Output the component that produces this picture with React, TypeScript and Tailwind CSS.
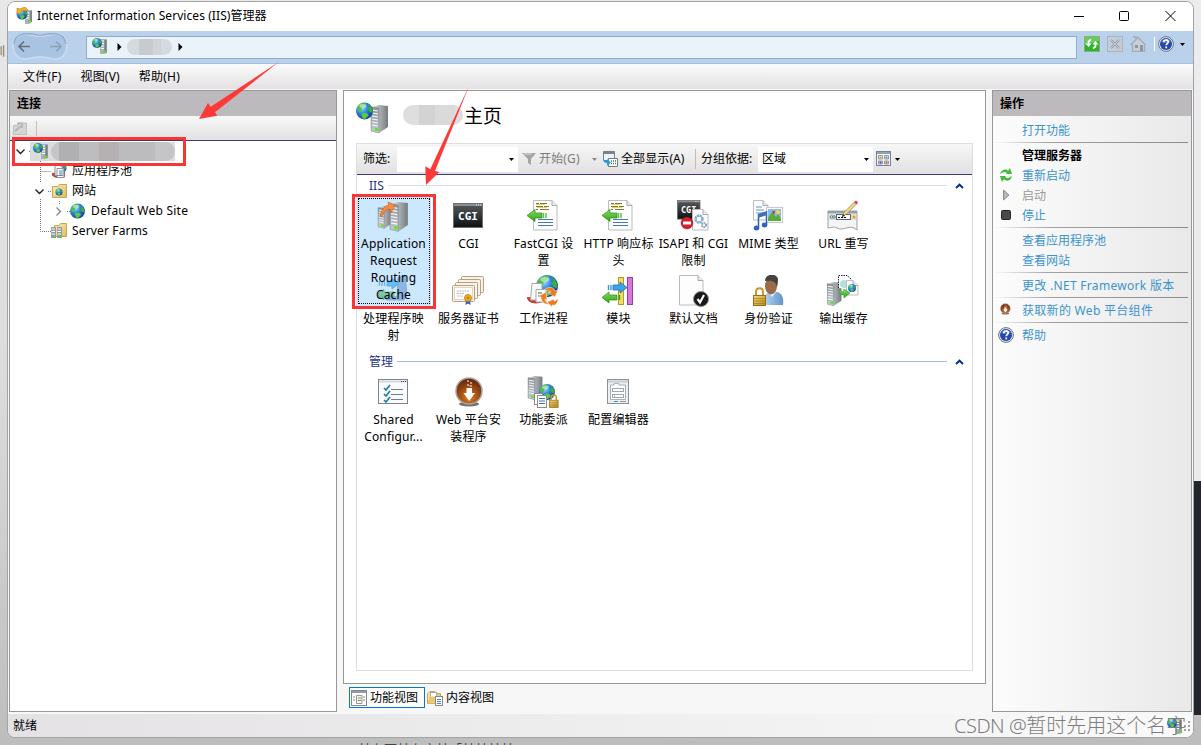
import type { ReactNode } from "react";

type IconProps = { className?: string };

const Defs = () => (
	<svg className="absolute h-0 w-0">
		<defs>
			<radialGradient id="globe" cx="0.35" cy="0.3" r="0.75">
				<stop offset="0" stopColor="#a9e4ff" />
				<stop offset="0.45" stopColor="#2f86dc" />
				<stop offset="1" stopColor="#123a96" />
			</radialGradient>
			<linearGradient id="metal" x1="0" x2="1">
				<stop offset="0" stopColor="#e6e9ea" />
				<stop offset="1" stopColor="#747a7e" />
			</linearGradient>
			<linearGradient id="front" x1="0" x2="0" y1="0" y2="1">
				<stop offset="0" stopColor="#8c9397" />
				<stop offset="1" stopColor="#c6cccf" />
			</linearGradient>
			<linearGradient id="dark" x1="0" x2="0" y1="0" y2="1">
				<stop offset="0" stopColor="#5a5c5e" />
				<stop offset="1" stopColor="#0e0f10" />
			</linearGradient>
			<linearGradient id="gold" x1="0" x2="1" y1="0" y2="1">
				<stop offset="0" stopColor="#f9dd82" />
				<stop offset="1" stopColor="#b78518" />
			</linearGradient>
			<linearGradient id="folder" x1="0" x2="1" y1="0" y2="1">
				<stop offset="0" stopColor="#fbeeb6" />
				<stop offset="1" stopColor="#e2b95c" />
			</linearGradient>
			<linearGradient id="shirt" x1="0" x2="1">
				<stop offset="0" stopColor="#b5d6f2" />
				<stop offset="1" stopColor="#6394c9" />
			</linearGradient>
			<linearGradient id="green" x1="0" x2="0" y1="0" y2="1">
				<stop offset="0" stopColor="#86e05a" />
				<stop offset="1" stopColor="#2ea01c" />
			</linearGradient>
			<radialGradient id="brown" cx="0.5" cy="0.75" r="0.75">
				<stop offset="0" stopColor="#e07a22" />
				<stop offset="1" stopColor="#5d2008" />
			</radialGradient>
		</defs>
	</svg>
);

const Svg = ({ size = 32, children, className = "" }: { size?: number; children: ReactNode; className?: string }) => (
	<svg width={size} height={size} viewBox={`0 0 ${size} ${size}`} className={`shrink-0 ${className}`}>
		{children}
	</svg>
);

// Shared pieces, each drawn around its own origin
const Globe = ({ x, y, r }: { x: number; y: number; r: number }) => (
	<g transform={`translate(${x} ${y}) scale(${r / 10})`}>
		<circle r="10" fill="url(#globe)" />
		<path d="M-8 -5 C-6 -9 0 -10 2 -8 L0 -5 L-3 -4 L-4 0 L-8 1 Z" fill="#4fc23c" />
		<path d="M4 -8 C8 -6 10 -2 9.500 2 L6 1 L4 -3 L6 -5 Z" fill="#3fae34" />
		<path d="M-4 3 L2 2 L5 5 L1 9 L-2 9 Z" fill="#57ca3e" />
		<ellipse cx="-2" cy="-6" rx="4" ry="2.200" fill="#fff" opacity="0.500" />
	</g>
);

const Tower = ({ x, y, s = 1 }: { x: number; y: number; s?: number }) => (
	<g transform={`translate(${x} ${y}) scale(${s})`}>
		<path d="M0 2 L8 0 L17 1 L17 22 L8 28 L0 26 Z" fill="url(#metal)" />
		<path d="M0 2 L8 3 L8 28 L0 26 Z" fill="url(#front)" stroke="#7c8488" strokeWidth="0.500" />
		<path d="M1 5 L7 6 M1 8 L7 9 M1 11 L7 12 M1 14 L7 15 M1 17 L7 18 M1 20 L7 21" stroke="#f5f7f8" strokeWidth="1.200" />
		<rect x="4" y="23" width="3.500" height="3" fill="#63e332" />
	</g>
);

const Sheet = ({ x, y, w, h }: { x: number; y: number; w: number; h: number }) => (
	<g transform={`translate(${x} ${y})`}>
		<path d={`M0.500 0.500 H${w - 5} L${w} 5.500 V${h} H0.500 Z`} fill="#fdfdfd" stroke="#b9bcc0" />
		<path d={`M${w - 5} 0.500 V5.500 H${w}`} fill="#e9ebed" stroke="#a6a9ad" />
	</g>
);

const ServerSmall = ({ className }: IconProps) => (
	<Svg size={16} className={className}>
		<path d="M8 1 H15 V15 L12 16 H8 Z" fill="#a9b2b4" />
		<path d="M9 3 H12 M9 5.500 H12 M9 8 H12 M9 10.500 H12" stroke="#fff" />
		<path d="M13.500 2 V15" stroke="#747d80" strokeWidth="2" />
		<rect x="11" y="13" width="3" height="2" fill="#62d928" />
		<Globe x={5} y={5} r={5} />
	</Svg>
);

const AppLogo = () => (
	<Svg size={17} className="mb-0.5">
		<path d="M9 3 H16 V15 L13 17 H9 Z" fill="#aab3b5" />
		<path d="M10 6 H13 M10 8.500 H13 M10 11 H13" stroke="#fff" />
		<path d="M15 4 V15" stroke="#6f787b" strokeWidth="1.500" />
		<rect x="12" y="13" width="3" height="2" fill="#62d928" />
		<Globe x={6} y={7} r={5.5} />
		<path d="M1 6 L1 1 L4 2 L9 0 L12 3 L9 4 L6 3 L4 7 Z" fill="#f0b428" stroke="#bd7b10" strokeWidth="0.600" />
	</Svg>
);

const HelpIcon = () => (
	<Svg size={16}>
		<circle cx="8" cy="8" r="7.400" fill="#e3e6ec" stroke="#70757f" />
		<circle cx="8" cy="8" r="6" fill="#2348a8" />
		<path d="M3 6 A5.500 5 0 0 1 13 6 Q8 8 3 6" fill="#7199df" opacity="0.600" />
		<path d="M5.700 6.300 C5.700 3.200 10.400 3.300 10.300 6 C10.200 7.600 8.200 7.600 8.200 9.300" fill="none" stroke="#fff" strokeWidth="1.700" />
		<rect x="7.300" y="10.500" width="1.800" height="1.800" fill="#fff" />
	</Svg>
);

const CaretDown = ({ className = "" }: IconProps) => (
	<svg width="5" height="3" viewBox="0 0 5 3" className={`shrink-0 ${className}`}>
		<path d="M0 0 H5 L2.500 3 Z" fill="currentColor" />
	</svg>
);

const CaretRight = ({ className = "" }: IconProps) => (
	<svg width="5" height="8" viewBox="0 0 5 8" className={`shrink-0 ${className}`}>
		<path d="M0.500 0 L4.500 4 L0.500 8 Z" fill="#000" />
	</svg>
);

const RoutingIcon = () => (
	<Svg>
		<Tower x={1} y={6} s={0.8} />
		<Tower x={13} y={2} s={1.05} />
		<path d="M3 16 C5 8 9 5 12 5 L11 2 L18 5 L14 13 L13 9 C9 9 6 13 5 17 Z" fill="#f58a42" stroke="#c55a1b" strokeWidth="0.600" />
	</Svg>
);

const Console = ({ s = 1 }: { s?: number }) => (
	<g transform={`scale(${s})`}>
		<rect x="0.500" y="0.500" width="29" height="24" fill="url(#dark)" stroke="#6e7174" />
		<path d="M1 2 H29" stroke="#8a8f94" strokeWidth="2" />
		<path d="M23 2 H28" stroke="#dfe7ef" strokeDasharray="1 1" />
		<text x="15" y="16.500" textAnchor="middle" fill="#fff" className="font-['DejaVu_Sans_Mono'] text-[11px] font-bold">
			CGI
		</text>
	</g>
);

const CgiIcon = () => (
	<Svg>
		<g transform="translate(1 3)">
			<Console />
		</g>
	</Svg>
);

const GreenArrowDoc = () => (
	<Svg>
		<Sheet x={6} y={0} w={24} h={30} />
		<path d="M9 3.500 H12 M13 3.500 H20 M9 6.500 H16 M17 6.500 H22 M9 9.500 H11 M13 9.500 H22" stroke="#857727" strokeWidth="1.200" />
		<path d="M9 4.500 H18 M10 7.500 H20" stroke="#ded074" />
		<path d="M11 19.500 H26 M11 22.500 H26 M11 25.500 H26" stroke="#4878b5" strokeWidth="1.200" />
		<path d="M0 15.500 L8 9.500 V13 H15 V18 H8 V21.500 Z" fill="url(#green)" stroke="#288b1b" strokeWidth="0.700" />
		<path d="M16.500 13 V18 M19 13 V18" stroke="#5fc445" strokeWidth="1.500" />
	</Svg>
);

const IsapiIcon = () => (
	<Svg>
		<Console s={0.78} />
		<Sheet x={15} y={9} w={16} h={21} />
		<circle cx="22" cy="19" r="3.500" fill="none" stroke="#87aecb" strokeWidth="2.500" strokeDasharray="2 .8" />
		<circle cx="22" cy="19" r="3" fill="none" stroke="#87aecb" />
		<circle cx="27" cy="25" r="2" fill="none" stroke="#7c9eb8" strokeWidth="2" strokeDasharray="1.400 .6" />
		<circle cx="10" cy="23" r="6" fill="#cf202b" stroke="#97141c" strokeWidth="0.500" />
		<rect x="6" y="21.500" width="8" height="3" fill="#fff" />
	</Svg>
);

const MimeIcon = () => (
	<Svg>
		<Sheet x={1} y={0} w={15} h={20} />
		<path d="M4 7 H10 M4 10 H12 M4 13 H12" stroke="#5d94c9" />
		<rect x="14.500" y="7.500" width="16" height="15" fill="#fff" stroke="#c5cbd0" />
		<rect x="16" y="9" width="13" height="12" fill="#8db9ee" />
		<path d="M16 21 V18 L20 12 L24 17 L26 14 L29 19 V21 Z" fill="#5aac37" />
		<path d="M20 11 H23 L22 15 Z" fill="#bc3928" />
		<circle cx="26" cy="12" r="2" fill="#f7d64c" />
		<path d="M6.500 28 V15 L14.500 12 V25" fill="none" stroke="#315fb5" strokeWidth="1.500" />
		<path d="M6 14 L15 11 V15 L6 18 Z" fill="#3f6dc0" />
		<ellipse cx="4.500" cy="28" rx="2.800" ry="2.500" fill="#2c65c0" />
		<ellipse cx="12.500" cy="25" rx="2.800" ry="2.500" fill="#2c65c0" />
	</Svg>
);

const RewriteIcon = () => (
	<Svg>
		<path d="M1 11 H30 V30 C22 23 17 32 10 28 C6 26 4 28 1 28 Z" fill="#f5f5f5" stroke="#9aa0a6" />
		<rect x="1" y="11" width="29" height="2.500" fill="#8fa0b2" />
		<rect x="2" y="14" width="27" height="6" fill="#e7dfbd" />
		<rect x="9.500" y="14.500" width="14" height="5" fill="#fff" stroke="#5d646b" />
		<path d="M11 17.500 H20" stroke="#000" strokeDasharray="2 1" />
		<circle cx="4.500" cy="17" r="1.300" fill="none" stroke="#4a8ad4" />
		<circle cx="7" cy="17" r="1.300" fill="none" stroke="#4a8ad4" />
		<circle cx="27" cy="17" r="1.500" fill="#e0a01e" />
		<path d="M15 16.500 L17 12.500 L27 2.500 L29 4.500 L19 14.500 Z" fill="#f6d88a" stroke="#9b752a" strokeWidth="0.700" />
		<path d="M27 2 L29 0.500 L31 2.500 L29.500 4.500 Z" fill="#cb4545" />
		<path d="M15 17 L16 14 L18 16 Z" fill="#333" />
	</Svg>
);

const HandlerIcon = () => (
	<Svg>
		<path d="M21 3 L28 0 L30 20 L27 25 H9 V21 L20 22 Z" fill="#8199c2" stroke="#6a83ad" />
		<path d="M2.500 6 V11 M5 6 V11 M7.500 6 V11" stroke="#329be4" strokeWidth="1.400" />
		<path d="M10 6 H15 V3 L22 8.500 L15 14 V11 H10 Z" fill="#38a5eb" stroke="#1c6fb9" strokeWidth="0.800" />
		<path d="M0 19.500 L7 14 V17 H17 V22 H7 V25 Z" fill="url(#green)" stroke="#288b1b" strokeWidth="0.700" />
	</Svg>
);

const CertificateIcon = () => (
	<Svg>
		{[9, 6, 3, 0].map((n) => (
			<rect key={n} x={0.5 + n} y={10.5 - n} width="22" height="16" rx="1" fill="#f7f2e8" stroke="#b5a283" />
		))}
		<rect x="2.500" y="12.500" width="18" height="12" fill="#fff" stroke="#e0d6c2" />
		<path d="M5 16 H17 M5 18.500 H12 M5 21 H11" stroke="#b9b9b9" strokeDasharray="2 .6" />
		<path d="M14 24 L13.500 30 L16 28.500 L18.500 30 L18 24 Z" fill="#2864c4" />
		<circle cx="16" cy="23" r="3.500" fill="#efb126" stroke="#bb7a0a" strokeWidth="0.800" />
		<circle cx="16" cy="23" r="1.300" fill="#be7e10" />
	</Svg>
);

const WorkerIcon = () => (
	<Svg>
		<Globe x={20} y={11} r={11} />
		<path d="M0 22 C0 28 8 30 16 27 V23 Z" fill="#c63b34" />
		<path d="M5 8.500 H15 V25 H3.500 Z" fill="#fafafa" stroke="#a9a9a9" />
		<path d="M9 14.500 H19 V27 H9 Z" fill="#fff" stroke="#a9a9a9" />
		<path d="M11 18 H15 M11 21 H15" stroke="#555" />
		<path d="M17 15 C21 11 27 12 28 16 L31 15 L28 22 L21 18 L24 17 C22 15 19 16 17 15 Z" fill="#f37822" stroke="#fff" strokeWidth="0.500" />
		<path d="M12 21 L19 17 L20 25 L18 24 C18 26 20 28 22 29 C17 30 14 26 14 22 Z" fill="#f37822" stroke="#fff" strokeWidth="0.500" />
		<path d="M31 23 C31 29 28 31 25 30 L25 32 L20 27 L27 24 V26 C29 26 30 24 31 23 Z" fill="#f37822" stroke="#fff" strokeWidth="0.500" />
	</Svg>
);

const ModulesIcon = () => (
	<Svg>
		<rect x="16.500" y="2.500" width="5" height="27" fill="#f3dc63" stroke="#b99b20" />
		<rect x="25.500" y="2.500" width="5" height="27" fill="#d877db" stroke="#9a3ca1" />
		<path d="M6.500 10 V15 M9 10 V15" stroke="#2f9ae4" strokeWidth="1.400" />
		<path d="M11 10 H18 V7 L25 12.500 L18 18 V15 H11 Z" fill="#38a5eb" stroke="#1c6fb9" strokeWidth="0.800" />
		<path d="M0 22.500 L7 17 V20 H15 V25 H7 V28 Z" fill="url(#green)" stroke="#288b1b" strokeWidth="0.700" />
		<path d="M17.500 20 V25" stroke="#2ea01c" strokeWidth="1.400" />
	</Svg>
);

const DefaultDocIcon = () => (
	<Svg>
		<Sheet x={2} y={0} w={24} h={30} />
		<circle cx="24" cy="24" r="7.500" fill="#191919" stroke="#8a8a8a" />
		<path d="M20.500 24 L23 27.500 L27 20" fill="none" stroke="#fff" strokeWidth="2.200" />
	</Svg>
);

const Padlock = ({ x, y, s = 1 }: { x: number; y: number; s?: number }) => (
	<g transform={`translate(${x} ${y}) scale(${s})`}>
		<path d="M3 9 V5 C3 0 10 0 10 5 V9" fill="none" stroke="#c69a2b" strokeWidth="2" />
		<rect x="0.500" y="8.500" width="12" height="10" fill="url(#gold)" stroke="#9b7015" />
		<path d="M1 11.500 H12 M1 14 H12 M1 16.500 H12" stroke="#a8781b" strokeWidth="0.700" />
	</g>
);

const AuthIcon = () => (
	<Svg>
		<path d="M12 30 C10 21 15 17 19 17 L25 17 C30 18 32 23 31 30 Z" fill="url(#shirt)" />
		<path d="M16 16 L20 22 L24 17 Z" fill="#eef5fb" />
		<ellipse cx="19" cy="11" rx="6" ry="8.500" fill="#9a6b4b" />
		<path d="M13 6 C13 -2 25 -2 26 4 C26 8 25.500 10 25 12 C24 8 22 5 13 6 Z" fill="#45433f" />
		<Padlock x={1} y={12} />
	</Svg>
);

const CacheIcon = () => (
	<Svg>
		<Tower x={0} y={7} s={0.85} />
		<path d="M11.500 13 V0.500 H20 L24 4 V14" fill="#fff" stroke="#222" strokeDasharray="1.500 1" />
		<circle cx="17" cy="9" r="4" fill="#b4e1df" />
		<Sheet x={19} y={5} w={12} h={15} />
		<Globe x={25} y={13} r={4} />
		<path d="M12 14 C14 18 17 17 17 14 L23 18 L17 23 V20 C14 20 12 18 12 14 Z" fill="url(#green)" stroke="#2f9b23" strokeWidth="0.600" />
	</Svg>
);

const SharedIcon = () => (
	<Svg>
		<rect x="1.500" y="3.500" width="29" height="24" fill="#fafbfc" stroke="#7d848c" />
		<path d="M2 5.500 H30" stroke="#d3d9df" strokeWidth="2" />
		<path d="M24 5.500 H30" stroke="#445" strokeDasharray="1 1" />
		<path d="M14 13.500 H26 M14 18.500 H26 M14 23.500 H26" stroke="#757b91" />
		<path d="M7 12 L9 14 L13 9 M7 18 L9 20 L13 15 M7 24 L9 26 L13 21" fill="none" stroke="#227fa4" strokeWidth="1.700" />
	</Svg>
);

const PlatformIcon = ({ size = 32 }: { size?: number }) => (
	<svg width={size} height={size} viewBox="0 0 32 32" className="shrink-0">
		<ellipse cx="17" cy="28" rx="10" ry="2.500" fill="#333" opacity="0.700" />
		<circle cx="17" cy="15" r="13" fill="url(#brown)" stroke="#aaa29d" strokeWidth="1.500" />
		<path d="M14.500 12 H20 V17 H23 L17.200 25 L11.500 17 H14.500 Z" fill="#fff" />
		<path d="M15 5 H17 M18 7 H20 M15 9 H17 M17.500 10 H20" stroke="#fff" strokeWidth="1.200" />
	</svg>
);

const DelegationIcon = () => (
	<Svg>
		<Tower x={1} y={0} s={0.85} />
		<Globe x={20} y={16} r={8} />
		<rect x="7.500" y="17.500" width="8" height="11" fill="#fff" stroke="#8c8c8c" />
		<rect x="10.500" y="19.500" width="9" height="12" fill="#fff" stroke="#8c8c8c" />
		<path d="M12 22.500 H18 M12 25 H18 M12 27.500 H18" stroke="#3a70bd" />
		<Padlock x={22} y={18} s={0.73} />
	</Svg>
);

const ConfigEditorIcon = () => (
	<Svg>
		<rect x="5.500" y="3.500" width="21" height="24" fill="#eceef0" stroke="#8a9198" />
		<path d="M6 5.500 H26" stroke="#c5ccd2" strokeWidth="2" />
		<path d="M8.500 9 H12 V7.500 H17 V9 H23.500 V23.500 H8.500 Z" fill="#fff" stroke="#a9b0b6" />
		<rect x="10.500" y="12.500" width="11" height="3" fill="#fff" stroke="#a0a7ad" />
		<rect x="10.500" y="18.500" width="11" height="3" fill="#fff" stroke="#a0a7ad" />
		<path d="M12 20 H13 M12 25.500 H16" stroke="#2e9ec7" />
		<path d="M18 25.500 H24" stroke="#999" />
	</Svg>
);

type Feature = { label: string[]; icon: () => ReactNode; selected?: boolean };

const iisFeatures: Feature[] = [
	{ label: ["Application", "Request", "Routing", "Cache"], icon: RoutingIcon, selected: true },
	{ label: ["CGI"], icon: CgiIcon },
	{ label: ["FastCGI 设", "置"], icon: GreenArrowDoc },
	{ label: ["HTTP 响应标", "头"], icon: GreenArrowDoc },
	{ label: ["ISAPI 和 CGI", "限制"], icon: IsapiIcon },
	{ label: ["MIME 类型"], icon: MimeIcon },
	{ label: ["URL 重写"], icon: RewriteIcon },
	{ label: ["处理程序映", "射"], icon: HandlerIcon },
	{ label: ["服务器证书"], icon: CertificateIcon },
	{ label: ["工作进程"], icon: WorkerIcon },
	{ label: ["模块"], icon: ModulesIcon },
	{ label: ["默认文档"], icon: DefaultDocIcon },
	{ label: ["身份验证"], icon: AuthIcon },
	{ label: ["输出缓存"], icon: CacheIcon },
];

const managementFeatures: Feature[] = [
	{ label: ["Shared", "Configur..."], icon: SharedIcon },
	{ label: ["Web 平台安", "装程序"], icon: PlatformIcon },
	{ label: ["功能委派"], icon: DelegationIcon },
	{ label: ["配置编辑器"], icon: ConfigEditorIcon },
];

function FeatureGrid({ items }: { items: Feature[] }) {
	return (
		<div className="-ml-px grid grid-cols-[repeat(7,75px)] auto-rows-[75px]">
			{items.map((item, index) => {
				const Icon = item.icon;
				return (
					<div key={index} className="relative flex flex-col items-center pt-1">
						{item.selected && (
							<div className="absolute left-px top-px z-10 h-[109px] w-[74px] bg-[#99d1ff]/50 p-px">
								<div className="h-[106px] border border-dotted border-black" />
							</div>
						)}
						<span className={`mr-px ${item.selected ? "relative z-20" : ""}`}>
							<Icon />
						</span>
						<div className={`mt-[3px] text-center leading-[17px] tracking-[0.15px] whitespace-nowrap ${item.selected ? "relative z-20" : ""}`}>
							{item.label.map((line) => (
								<div key={line}>{line}</div>
							))}
						</div>
					</div>
				);
			})}
		</div>
	);
}

function GroupHeader({ title, line }: { title: string; line: string }) {
	return (
		<div className="flex h-[21px] items-center pl-3 text-[#1e3287]">
			<span>{title}</span>
			<span className={`ml-1 h-px flex-1 ${line}`} />
			<svg width="9" height="6" viewBox="0 0 9 6" className="mr-2 ml-2">
				<path d="M1 5 L4.500 1.700 L8 5" fill="none" stroke="#003399" strokeWidth="2" />
			</svg>
		</div>
	);
}

function TitleBar() {
	return (
		<div className="flex h-[29px] items-center bg-white pl-2">
			<AppLogo />
			<span className="mb-0.5 ml-1 flex-1 tracking-[0.07px]">Internet Information Services (IIS)管理器</span>
			<svg width="102" height="12" viewBox="0 0 102 12" className="mr-[17px] mb-px" fill="none" stroke="#000">
				<path d="M0 6.500 H10" />
				<rect x="45.500" y="1.500" width="9" height="9" rx="1" />
				<path d="M91.500 1 L101.500 11 M101.500 1 L91.500 11" />
			</svg>
		</div>
	);
}

function NavBar() {
	return (
		<div className="flex h-[33px] items-center border-b border-[#a5bfdf] bg-[#b9d1ea] pl-1">
			<svg width="56" height="29" viewBox="0 0 56 29" fill="none" className="mb-px">
				<path
					d="M13 2 C19 2 21 4 28 4 C35 4 38 2 43 2 C59 2 59 27 43 27 C38 27 35 25 28 25 C21 25 19 27 13 27 C-3 27 -3 2 13 2 Z"
					fill="#a9c4e2"
					stroke="#c6daef"
					strokeWidth="2"
				/>
				<path d="M2 12 C3 -1 18 1 28 3.500 C38 1 52 -1 54 12" stroke="#8da7c8" strokeWidth="1.200" />
				<path d="M7 14.500 H18 M12 9.500 L7 14.500 L12 19.500" stroke="#65717f" strokeWidth="1.700" />
				<path d="M38 14.500 H49 M44 9.500 L49 14.500 L44 19.500" stroke="#8ba1b9" strokeWidth="1.700" />
			</svg>
			<div className="ml-[18px] flex h-[23px] w-[991px] items-center border border-[#91abc8] bg-[#eaf2fa] pl-[5px]">
				<ServerSmall className="mb-0.5" />
				<CaretRight className="mb-px ml-[9px]" />
				<span className="ml-[5px] flex h-4 w-[45px] overflow-hidden rounded-full bg-[#d5dae0]">
					<span className="ml-3 w-[14px] bg-[#c7cacf]" />
					<span className="w-2 bg-[#d0d3d8]" />
				</span>
				<CaretRight className="mb-px ml-1.5" />
			</div>
			<div className="mb-1.5 ml-[7px] flex items-center">
				<Svg size={16}>
					<rect x="0.500" y="0.500" width="15" height="15" fill="#2bb52b" stroke="#8dac80" />
					<path d="M1 1 H15 V5 L1 9 Z" fill="#8fdc7c" opacity="0.600" />
					<path d="M1.500 7.500 H7.500 L4.500 11 Z M8.500 8.500 H14.500 L11.500 5 Z" fill="#fff" />
					<path d="M4.500 8 V5.500 L7 3.500 M11.500 8 V10.500 L9 12.500" fill="none" stroke="#fff" strokeWidth="1.700" />
				</Svg>
				<Svg size={16} className="ml-[7px]">
					<rect x="0.500" y="0.500" width="15" height="15" fill="#c4ccd5" stroke="#aab5c0" />
					<path d="M4 4 L12 12 M12 4 L4 12" stroke="#8f9ba8" strokeWidth="2.200" />
					<path d="M4 4 L12 12 M12 4 L4 12" stroke="#d4dbe2" strokeWidth="0.800" />
				</Svg>
				<Svg size={16} className="ml-[7px]">
					<path d="M3 1 H6 V4 M0.500 9 L8 1.500 L15.500 9 M2.500 8 V15.500 H14.500 V8" fill="#c9ced3" stroke="#a3abb4" strokeWidth="1.300" />
					<path d="M5 9 H8 V12 H5 Z M10 9 H13 V15 H10 Z" fill="#8d959d" />
				</Svg>
				<span className="ml-2 h-[14px] w-px bg-white" />
				<span className="ml-[3px]">
					<HelpIcon />
				</span>
				<CaretDown className="ml-1.5" />
			</div>
		</div>
	);
}

function Chevron({ open }: { open?: boolean }) {
	return (
		<svg width="9" height="9" viewBox="0 0 9 9" className="shrink-0" fill="none" strokeWidth="1.400">
			{open ? <path d="M0.500 2.500 L4.500 6.500 L8.500 2.500" stroke="#222" /> : <path d="M2.500 0.500 L6.500 4.500 L2.500 8.500" stroke="#8a8a8a" />}
		</svg>
	);
}

function ConnectionsPanel() {
	return (
		<div className="flex w-[328px] flex-col border border-[#989898] bg-white">
			<div className="flex h-[25px] items-center bg-[#bcbabd] pl-[7px] font-bold">连接</div>
			<div className="flex h-[25px] items-center border-b border-[#3e3a6d] bg-gradient-to-b from-[#f9f9f9] to-[#e2e0e2] pl-[3px]">
				<Svg size={14}>
					<path d="M0.500 4.500 H5 V2 H13.500 V13.500 H0.500 Z" fill="#d5d5d5" stroke="#c0c0c0" />
					<path d="M2 10 L8 5 M4 2.500 H9 V7" fill="none" stroke="#b4b4b4" strokeWidth="1.700" />
				</Svg>
				<span className="ml-[9px] h-[15px] w-px bg-[#c5c2ac]" />
			</div>
			<div className="relative">
				<svg width="80" height="100" className="absolute top-0 left-0" fill="none" stroke="#777" strokeDasharray="1 1">
					<path d="M19 10.500 H23 M30.500 20 V42 M30.500 58 V90.500 H41 M30.500 30.500 H41 M38 50.500 H42 M49.500 60 V64 M57 70.500 H60" />
				</svg>
				<div className="flex h-5 items-center pl-1.5">
					<Chevron open />
					<span className="relative ml-[5px] flex h-[19px] w-[145px] items-center bg-[#dcdcdc] pl-[3px]">
						<ServerSmall />
						<span className="ml-0.5 flex h-[19px] flex-1 overflow-hidden rounded-full bg-[#c5c5c8]">
							<span className="ml-2 w-5 bg-[#b0b0b2]" />
							<span className="w-5 bg-[#bdbdbf]" />
							<span className="w-5 bg-[#b5b1b3]" />
							<span className="w-9 bg-[#bcbbbe]" />
						</span>
					</span>
				</div>
				<div className="relative flex h-5 items-center pl-[41px]">
					<Svg size={16}>
						<Globe x={11} y={5} r={4.5} />
						<path d="M1 10 C0 15 8 16 14 14 V9 Z" fill="#cd3c3c" />
						<path d="M4 2.500 H9 L12 5 V12.500 H4 Z M6 5.500 H13 V14.500 H6 Z" fill="#fff" stroke="#8c9098" />
						<path d="M8 8 H11 M8 10 H11 M8 12 H11" stroke="#4d81ba" />
					</Svg>
					<span className="ml-[5px]">应用程序池</span>
				</div>
				<div className="relative flex h-5 items-center pl-[25px]">
					<Chevron open />
					<Svg size={16} className="ml-2">
						<path d="M0.500 3.500 H6 L7.500 1.500 H14.500 V14.500 H0.500 Z" fill="url(#folder)" stroke="#cba651" />
						<Globe x={7} y={9} r={3.5} />
					</Svg>
					<span className="ml-[4px]">网站</span>
				</div>
				<div className="relative flex h-5 items-center pl-[44px]">
					<Chevron />
					<Svg size={16} className="ml-[6px]">
						<Globe x={8.5} y={8} r={7.5} />
					</Svg>
					<span className="ml-1.5 tracking-[0.24px]">Default Web Site</span>
				</div>
				<div className="relative flex h-5 items-center pl-[41px]">
					<Svg size={16}>
						<path d="M3.500 2.500 H8 L9.500 0.500 H15.500 V13.500 H3.500 Z" fill="url(#folder)" stroke="#cba651" />
						<path d="M0 4 H5 V15 H0 Z M6 4 H11 V15 H6 Z" fill="#939c9f" />
						<path d="M0.500 6 H4 M0.500 8.500 H4 M0.500 11 H4 M6.500 6 H10 M6.500 8.500 H10 M6.500 11 H10" stroke="#fff" />
						<path d="M3 14 H5 M9 14 H11" stroke="#50cf26" strokeWidth="2" />
					</Svg>
					<span className="ml-[5px] tracking-[0.15px]">Server Farms</span>
				</div>
			</div>
		</div>
	);
}

function FilterBar() {
	return (
		<div className="flex h-[31px] items-center border-b border-[#3e3a6d] bg-gradient-to-b from-[#f7f7f7] to-[#e2e0e2] pl-1.5">
			<span className="w-[34px]">筛选:</span>
			<div className="flex h-[25px] w-[121px] items-center justify-end bg-white pr-1">
				<CaretDown />
			</div>
			<Svg size={14} className="ml-1">
				<path d="M0 1 H14 L9 7 V13 L6 11 V7 Z" fill="#a5a5a5" />
				<path d="M2 2 H10" stroke="#ddd" />
			</Svg>
			<span className="ml-[3px] w-[53px] tracking-[0.15px] text-[#7c7c7c]">开始(G)</span>
			<CaretDown className="text-[#888]" />
			<Svg size={17} className="ml-[5px]">
				<path d="M1.500 0.500 H12.500 V9.500 H1.500 Z" fill="#eef2f7" stroke="#75818d" />
				<path d="M1 2 H13" stroke="#75818d" strokeWidth="2" />
				<path d="M6.500 7.500 H15.500 V15.500 H6.500 Z" fill="#fff" stroke="#71798a" />
				<path d="M9 10 H14 M9 12.500 H14" stroke="#4d67aa" strokeDasharray="1 1" strokeWidth="1.500" />
				<path d="M1 7 C1 11 3 12 5 12 V15 L9 11.500 L5 8 V10 C3 10 2 9 1 7 Z" fill="#279ee0" />
			</Svg>
			<span className="ml-0.5 w-[74px] tracking-[0.1px]">全部显示(A)</span>
			<span className="h-5 w-px bg-[#c2c1a8]" />
			<span className="ml-[5px] w-[57px]">分组依据:</span>
			<div className="flex h-[25px] w-[115px] items-center justify-between bg-white pr-1 pl-1">
				区域
				<CaretDown />
			</div>
			<Svg size={16} className="ml-[3px]">
				<rect x="0.500" y="0.500" width="14" height="14" fill="#f4f4f4" stroke="#788391" />
				<path d="M1 2 H14" stroke="#91a2b7" strokeWidth="2" />
				<path d="M2.500 4.500 H6.500 V8 H2.500 Z M8.500 4.500 H12.500 V8 H8.500 Z M2.500 10 H6.500 V13 H2.500 Z M8.500 10 H12.500 V13 H8.500 Z" fill="#fff" stroke="#9299a1" />
				<path d="M3.500 6.500 H5.500" stroke="#b2a32b" strokeWidth="2" />
				<path d="M9.500 6.500 H11.500" stroke="#3f8dcc" strokeWidth="2" />
				<path d="M3.500 11.500 H5.500" stroke="#3449bf" strokeWidth="2" />
				<path d="M9.500 11.500 H11.500" stroke="#d0522a" strokeWidth="2" />
			</Svg>
			<CaretDown className="ml-[3px]" />
		</div>
	);
}

function HomePanel() {
	return (
		<div className="ml-[6px] flex w-[643px] flex-col">
			<div className="flex h-[594px] flex-col border border-[#989898] bg-white px-3 pb-3">
				<div className="flex h-[52px] items-center">
					<Svg size={34}>
						<Tower x={15} y={5} />
						<Globe x={8.5} y={11} r={8.5} />
					</Svg>
					<span className="mb-1 ml-[13px] flex h-5 w-[60px] overflow-hidden rounded-full bg-[#dfdedf]">
						<span className="ml-4 w-4 bg-[#d3d3d4]" />
						<span className="w-5 bg-[#dadadb]" />
					</span>
					<span className="mb-0.5 ml-px text-[19px]">主页</span>
				</div>
				<div className="flex-1 border border-[#dedede]">
					<FilterBar />
					<GroupHeader title="IIS" line="bg-[#d5e0ed]" />
					<FeatureGrid items={iisFeatures} />
					<div className="pt-[5px]">
						<GroupHeader title="管理" line="bg-[#a9bbda]" />
					</div>
					<FeatureGrid items={managementFeatures} />
				</div>
			</div>
			<div className="flex items-start pt-[3px] pl-1.5">
				<div className="flex h-[21px] w-[76px] items-center border border-[#0b74cb] bg-white pl-px">
					<Svg size={16}>
						<rect x="0.500" y="0.500" width="15" height="15" fill="#fff" stroke="#85888c" />
						<path d="M1 2 H15" stroke="#8e9caf" strokeWidth="2" />
						<path d="M5.500 5.500 H11 V13.500 H5.500 Z" fill="#f6f3df" stroke="#999" />
						<path d="M7 8 H10 M7 10.500 H10 M2 7 H4 M2 10 H4 M12 7 H14 M12 10 H14" stroke="#888" />
					</Svg>
					<span className="ml-[3px]">功能视图</span>
				</div>
				<div className="flex h-[21px] items-center pl-0.5">
					<Svg size={16}>
						<path d="M0.500 3.500 L3 1.500 H8 L10 3.500 H13.500 V13.500 H0.500 Z" fill="url(#folder)" stroke="#cba651" />
						<rect x="3.500" y="2.500" width="6" height="6" fill="#fff" stroke="#aaa" />
						<path d="M0.500 13.500 L3 6.500 H12 L10 13.500 Z" fill="#eac86f" />
						<rect x="8.500" y="6.500" width="7" height="9" fill="#fff" stroke="#888" />
						<path d="M10 9.500 H14 M10 11.500 H14 M10 13.500 H14" stroke="#4a83c8" />
					</Svg>
					<span className="ml-[3px]">内容视图</span>
				</div>
			</div>
		</div>
	);
}

function ActionRow({ label, icon, tone = "text-[#3c94ce]" }: { label: string; icon?: ReactNode; tone?: string }) {
	return (
		<div className={`flex h-5 items-center ${tone}`}>
			<span className="flex w-[26px] justify-center">{icon}</span>
			<span className="ml-[3px] pt-0.5 whitespace-nowrap">{label}</span>
		</div>
	);
}

const Separator = () => (
	<div className="flex h-[5px] items-center pr-[3px]">
		<div className="h-px flex-1 bg-gradient-to-r from-transparent via-[#a0a0a0] via-30% to-[#8c8c8c]" />
	</div>
);

function ActionsPanel() {
	return (
		<div className="ml-[6px] flex w-[200px] flex-col border border-[#989898] bg-gradient-to-r from-[#fcfcfc] to-[#e9e9e9]">
			<div className="flex h-[25px] items-center bg-[#bcbabd] pl-[7px] font-bold">操作</div>
			<div className="pt-1">
				<ActionRow label="打开功能" />
				<Separator />
				<ActionRow label="管理服务器" tone="font-bold text-black" />
				<ActionRow
					label="重新启动"
					icon={
						<Svg size={14}>
							<path d="M1 6 C2 2 7 0 9 3 L11 0 L13 6 H7 L8 5 C6 3 4 4 1 6 Z" fill="#41ba35" />
							<path d="M13 8 C12 13 7 14 5 11 L3 14 L1 8 H7 L6 9 C8 11 10 10 13 8 Z" fill="#41ba35" />
						</Svg>
					}
				/>
				<ActionRow
					label="启动"
					tone="text-[#9a9a9a]"
					icon={
						<Svg size={12}>
							<path d="M3.500 1 L9 6 L3.500 11 Z" fill="#b8b8b8" stroke="#8c8c8c" />
						</Svg>
					}
				/>
				<ActionRow
					label="停止"
					icon={
						<Svg size={10}>
							<rect x="0.500" y="0.500" width="9" height="9" rx="1" fill="#494949" stroke="#242424" />
						</Svg>
					}
				/>
				<Separator />
				<ActionRow label="查看应用程序池" />
				<ActionRow label="查看网站" />
				<Separator />
				<ActionRow label="更改 .NET Framework 版本" tone="tracking-[0.3px] text-[#3c94ce]" />
				<Separator />
				<ActionRow
					label="获取新的 Web 平台组件"
					tone="tracking-[0.3px] text-[#3c94ce]"
					icon={
						<span className="mr-[3px] mb-[3px]">
							<PlatformIcon size={12} />
						</span>
					}
				/>
				<Separator />
				<ActionRow label="帮助" icon={<HelpIcon />} />
			</div>
		</div>
	);
}

export default function App() {
	return (
		<div className="relative h-[745px] w-[1201px] overflow-hidden bg-gradient-to-b from-[#e8e8e8] via-[#dcdcdc] to-[#bdbdbd] pt-px pl-[7px] font-['Noto_Sans','Noto_Sans_CJK_SC',sans-serif] text-[12px] leading-4 text-black">
			<Defs />
			<div className="absolute top-[481px] right-0 h-[234px] w-3 bg-[#22262c]" />
			<div className="absolute top-0 right-0 h-[481px] w-2 bg-[#ececee]" />
			<div className="absolute top-[44px] left-[-7px] text-[#765]">训</div>
			<div className="absolute top-[741px] left-[358px] text-[13px] whitespace-nowrap text-[#444]">其右下其右方其「其其其其</div>

			<div className="relative flex h-[737px] w-[1187px] flex-col overflow-hidden rounded-lg border border-[#a3a3a3] bg-[#f7f7f7]">
				<TitleBar />
				<NavBar />
				<div className="flex h-[25px] shrink-0 items-center gap-[19px] bg-gradient-to-b from-[#fbfbfb] to-[#e3e1e3] pl-[15px] tracking-[0.2px]">
					<span>文件(F)</span>
					<span>视图(V)</span>
					<span>帮助(H)</span>
				</div>
				<div className="mt-px flex h-[622px] shrink-0 pl-px">
					<ConnectionsPanel />
					<HomePanel />
					<ActionsPanel />
				</div>
				<div className="mt-0.5 flex flex-1 items-center justify-between bg-gradient-to-r from-[#e4e2e4] to-[#fafafa] pr-0.5 pl-[5px]">
					<span>就绪</span>
					<div className="flex items-center">
						<ServerSmall className="-mr-1" />
						<svg width="12" height="12" viewBox="0 0 12 12">
							<path d="M9 2 H11 M5 6 H7 M9 6 H11 M1 10 H3 M5 10 H7 M9 10 H11" stroke="#a0a0a0" strokeWidth="2" />
						</svg>
					</div>
				</div>
			</div>

			{/* Annotations on top of the window */}
			<div className="absolute top-[137px] left-[12px] h-[29px] w-[174px] border-3 border-[#fa3535]" />
			<div className="absolute top-[194px] left-[352px] z-30 h-[115px] w-[84px] border-3 border-[#fa3535]" />
			<svg width="500" height="200" className="absolute top-0 left-0" fill="#fd3a38">
				<path d="M199 119 L208 103 L210.700 106.700 L278.700 62 L215 112.300 L217.300 115.700 Z" />
				<path d="M426 185 L425.300 166.300 L430.300 169.300 L469 86 L435 171 L439.300 172 Z" />
			</svg>
			<div className="absolute top-[714px] left-[954px] text-[20px] leading-6 font-light whitespace-nowrap text-[#7d7d7d]">
				<span className="tracking-[-0.5px]">CSDN @</span>暂时先用这个名字
			</div>
		</div>
	);
}
